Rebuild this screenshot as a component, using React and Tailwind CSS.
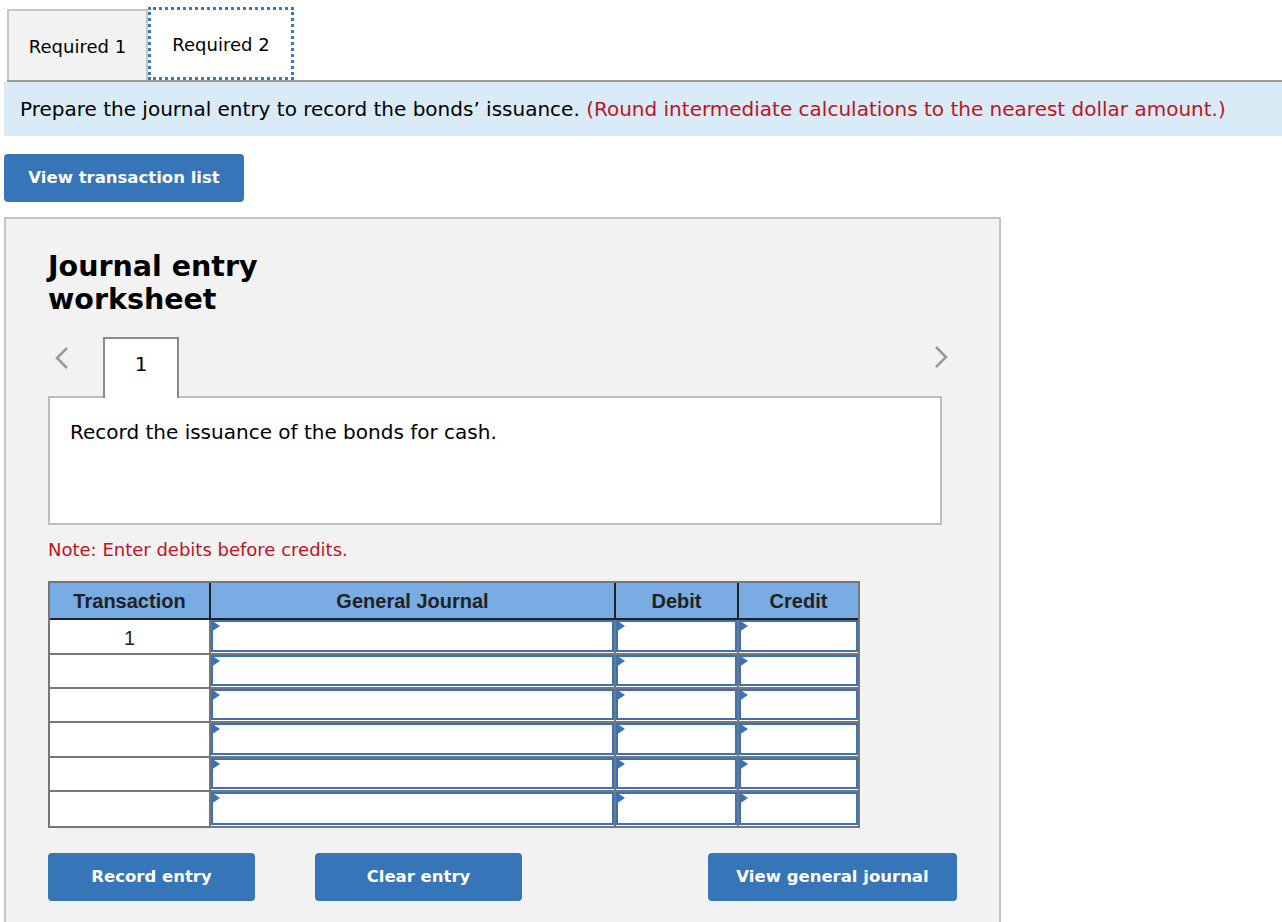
import React from 'react'

const verdana = { fontFamily: '"DejaVu Sans", Verdana, sans-serif' }

function Cell() {
  return (
    <div className="relative h-full border-l-2 border-[#777] bg-white pb-px">
      <div className="relative h-full w-full border-2 border-[#3a72b5] bg-white">
        <span className="absolute -left-[2px] -top-[2px] h-0 w-0 border-y-[6px] border-l-[9px] border-y-transparent border-l-[#3a72b5]" />
      </div>
    </div>
  )
}

function Row({ label, last, tall }) {
  return (
    <div className={`grid ${tall ? 'h-[35px]' : 'h-[34px]'} grid-cols-[159px_405px_123px_121px] ${last ? '' : 'border-b-2 border-[#777]'}`}>
      <div className="flex items-center justify-center bg-white pt-[3px] font-['Liberation_Sans',Arial,sans-serif] text-[20px] text-[#222]">{label}</div>
      <Cell />
      <Cell />
      <Cell />
    </div>
  )
}

export default function App() {
  const rows = ['1', '', '', '', '', '']
  return (
    <div className="min-h-[922px] bg-white" style={verdana}>
      {/* tabs */}
      <div className="flex items-end px-[7px] pt-[7px]">
        <div className="flex h-[71px] w-[141px] items-center justify-center border-x-2 border-t-2 border-[#c6c6c6] bg-[#f2f2f2] pt-[2px] text-[18px] leading-none text-black">
          Required 1
        </div>
        <div className="flex h-[73px] w-[146px] items-center justify-center border-[3px] border-dotted border-[#3a78c0] bg-white pt-[2px] text-[18px] leading-none text-black">
          Required 2
        </div>
      </div>
      <div className="ml-[7px] h-[2px] bg-[#9a9a9a]" />
      <div className="ml-[4px] flex h-[54px] items-center bg-[#d9ebf7] px-4 text-[20px] text-black">
        <span>
          Prepare the journal entry to record the bonds’ issuance.{' '}
          <span className="text-[#c0121f]">(Round intermediate calculations to the nearest dollar amount.)</span>
        </span>
      </div>

      <div className="ml-[4px] mt-[18px]">
        <button className="h-[48px] w-[240px] rounded-[4px] bg-[#3675b8] text-[16.5px] font-bold text-white">
          View transaction list
        </button>
      </div>

      <div className="ml-[4px] mt-[15px] w-[997px] border-2 border-b-0 border-[#c4c4c4] bg-[#f2f2f2] pb-[30px] pl-[42px] pr-[56px]">
        <h2 className="mt-[31px] text-[28.5px] font-bold leading-[33px] text-black">
          Journal entry
          <br />
          worksheet
        </h2>

        <div className="mt-[21px] flex items-end justify-between">
          <div className="flex items-end">
            <svg width="20" height="26" viewBox="0 0 20 26" className="mb-[25px] ml-[4px]">
              <path d="M15 3 L5 13 L15 23" fill="none" stroke="#999" strokeWidth="2.5" />
            </svg>
            <div className="relative z-10 -mb-[2px] ml-[31px] flex h-[61px] w-[76px] items-center justify-center border-x-2 border-t-2 border-[#8a8a8a] bg-white pb-[10px] text-[20px] leading-none text-black">
              1
            </div>
          </div>
          <svg width="20" height="26" viewBox="0 0 20 26" className="mb-[26px] mr-[-8px]">
            <path d="M5 3 L15 13 L5 23" fill="none" stroke="#999" strokeWidth="2.5" />
          </svg>
        </div>
        <div className="h-[129px] w-[894px] border-2 border-[#bcbcbc] bg-white px-[20px] pt-[20px] text-[20px] leading-[28px] text-black">
          Record the issuance of the bonds for cash.
        </div>

        <p className="mt-[13px] text-[18px] leading-[24px] text-[#c0121f]">Note: Enter debits before credits.</p>

        <div className="mt-[19px] w-[812px] border-2 border-[#777]">
          <div className="grid h-[37px] grid-cols-[159px_405px_123px_121px] border-b-2 border-[#222] bg-[#78ace2] font-['Liberation_Sans',Arial,sans-serif] text-[20px] font-bold text-[#222]">
            <div className="flex items-center justify-center">Transaction</div>
            <div className="flex items-center justify-center border-l-2 border-[#222]">General Journal</div>
            <div className="flex items-center justify-center border-l-2 border-[#222]">Debit</div>
            <div className="flex items-center justify-center border-l-2 border-[#222]">Credit</div>
          </div>
          {rows.map((r, i) => (
            <Row key={i} label={r} tall={i === 0 || i === 3} last={i === rows.length - 1} />
          ))}
        </div>

        <div className="mt-[25px] flex w-[910px] items-center">
          <button className="h-[48px] w-[207px] shrink-0 rounded-[4px] bg-[#3675b8] text-[16.5px] font-bold text-white">Record entry</button>
          <button className="ml-[60px] h-[48px] w-[207px] shrink-0 rounded-[4px] bg-[#3675b8] text-[16.5px] font-bold text-white">Clear entry</button>
          <button className="ml-[186px] h-[48px] w-[249px] shrink-0 rounded-[4px] bg-[#3675b8] text-[16.5px] font-bold text-white">View general journal</button>
        </div>
      </div>
    </div>
  )
}
